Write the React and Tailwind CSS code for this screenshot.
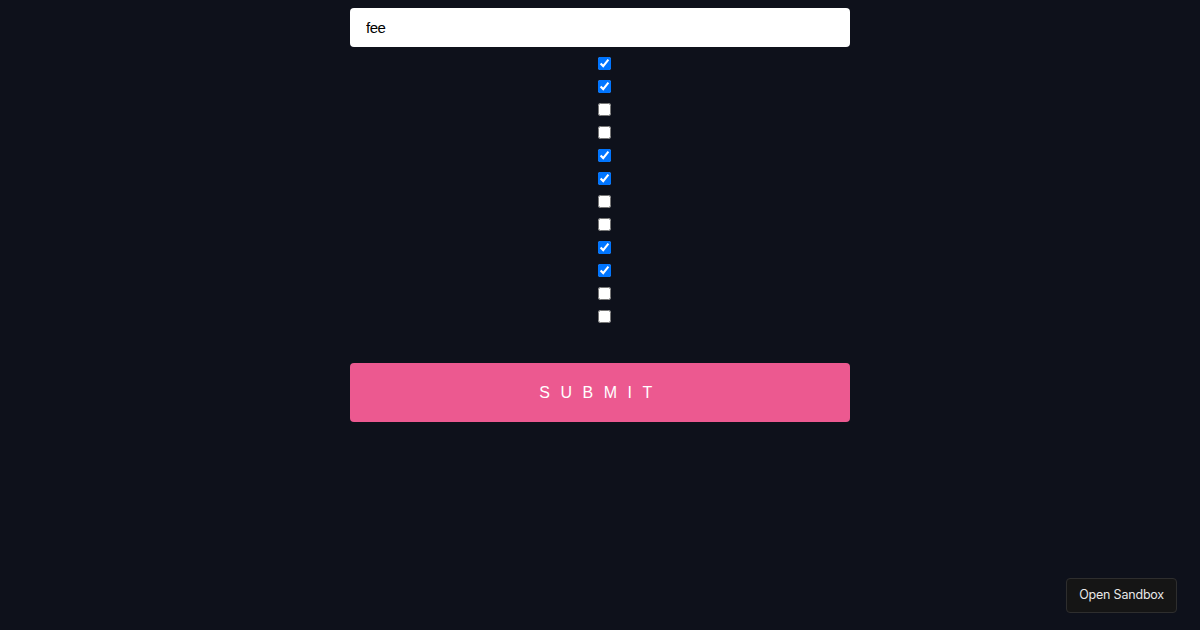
import React from 'react';

const checks = [true, true, false, false, true, true, false, false, true, true, false, false];

const App = () => {
  return (
    <div className="relative min-h-[630px] w-full bg-[#0e111b] font-['Liberation_Sans',Arial,sans-serif]">
      <form className="mx-auto flex w-[500px] flex-col pt-[8px]">
        <input
          type="text"
          defaultValue="fee"
          className="h-[39px] w-full rounded-[4px] bg-white px-[16px] text-[15px] tracking-[-0.5px] text-black outline-none"
        />
        <div className="mt-[5px] flex flex-col">
          {checks.map((checked, i) => (
            <div key={i} className="flex h-[23px] items-center justify-center pl-[8px]">
              <input type="checkbox" defaultChecked={checked} className="m-0 h-[13px] w-[13px]" />
            </div>
          ))}
        </div>
        <button
          type="button"
          className="mt-[35px] h-[59px] w-full rounded-[4px] bg-[#ec5990] pl-[2px] text-[16px] tracking-[10.5px] text-white"
        >
          SUBMIT
        </button>
      </form>
      <div className="absolute bottom-[17px] right-[23px] rounded-[4px] border border-[#2e2e2e] bg-[#151515] px-[12px] py-[7px] font-['Inter',sans-serif] text-[12.5px] tracking-[-0.2px] text-[#e8e8e8]">
        Open Sandbox
      </div>
    </div>
  );
};

export default App;
